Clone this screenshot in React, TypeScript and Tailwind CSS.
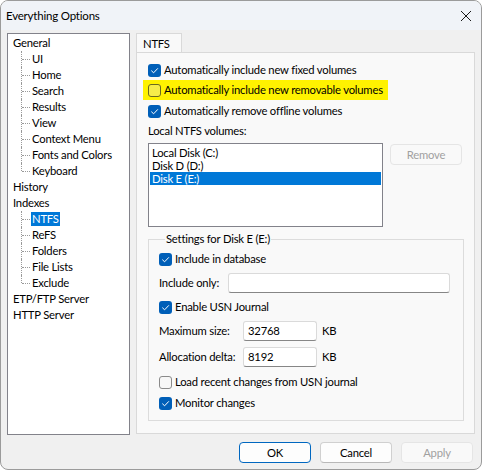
import type { ReactNode } from "react";

type Node = { label: string; children?: string[] };

const tree: Node[] = [
  { label: "General", children: ["UI", "Home", "Search", "Results", "View", "Context Menu", "Fonts and Colors", "Keyboard"] },
  { label: "History" },
  { label: "Indexes", children: ["NTFS", "ReFS", "Folders", "File Lists", "Exclude"] },
  { label: "ETP/FTP Server" },
  { label: "HTTP Server" },
];

function Check({ on, dark }: { on: boolean; dark?: boolean }) {
  if (on) {
    return (
      <span className="flex h-[13px] w-[13px] shrink-0 items-center justify-center rounded-[3px] bg-[#005fb8]">
        <svg width="13" height="13" viewBox="0 0 13 13" fill="none">
          <path d="M3.6 6.9 L5.6 8.8 L9.6 4.6" stroke="#fff" strokeWidth="1" strokeLinecap="round" strokeLinejoin="round" />
        </svg>
      </span>
    );
  }
  return (
    <span
      className={`h-[13px] w-[13px] shrink-0 rounded-[3px] border ${dark ? "border-[#6a6a20] bg-[#f6ec4a]" : "border-[#8a8a8a] bg-[#f7f7f7]"}`}
    />
  );
}

function CheckRow({ on, children, className = "" }: { on: boolean; children: ReactNode; className?: string }) {
  return (
    <div className={`flex h-[20px] items-center gap-[3px] whitespace-nowrap ${className}`}>
      <Check on={on} />
      <span>{children}</span>
    </div>
  );
}

function Field({ value, className = "" }: { value?: string; className?: string }) {
  return (
    <div className={`flex h-[20px] items-center rounded-[3px] border border-[#dadada] border-b-[#868686] bg-white px-[4px] ${className}`}>
      {value}
    </div>
  );
}

function Button({ label, primary, disabled }: { label: string; primary?: boolean; disabled?: boolean }) {
  return (
    <div
      className={`flex h-[21px] w-[72px] items-center justify-center rounded-[4px] border ${
        primary
          ? "border-[#0067c0] bg-[#fdfdfd] text-black"
          : disabled
            ? "border-[#e5e5e5] bg-[#f9f9f9] text-[#a0a0a0]"
            : "border-[#d0d0d0] border-b-[#b8b8b8] bg-[#fdfdfd] text-black"
      }`}
    >
      {label}
    </div>
  );
}

function Tree() {
  return (
    <div className="h-[402px] w-[123px] whitespace-nowrap border border-[#82828a] bg-white pl-[5px] pt-[1px]">
      {tree.map((n) => (
        <div key={n.label}>
          <div className="flex h-[16px] items-center">{n.label}</div>
          {n.children?.map((c, i) => {
            const last = i === n.children!.length - 1;
            return (
              <div key={c} className="relative flex h-[16px] items-center pl-[18px]">
                <span className={`absolute left-[8px] top-0 w-0 border-l border-dotted border-[#9a9a9a] ${last ? "h-[8px]" : "h-[16px]"}`} />
                <span className="absolute left-[9px] top-[8px] h-0 w-[8px] border-t border-dotted border-[#9a9a9a]" />
                <span className={`px-[1px] leading-[14px] ${c === "NTFS" ? "bg-[#0078d7] text-white" : ""}`}>{c}</span>
              </div>
            );
          })}
        </div>
      ))}
    </div>
  );
}

export default function App() {
  return (
    <div className="h-[470px] w-[482px] bg-white font-[family-name:Lato,sans-serif] text-[11.25px] leading-[16px] tracking-[-0.2px] text-black">
      <div className="flex h-full flex-col overflow-hidden rounded-[8px] border border-[#9b9b9b] bg-[#f0f0f0]">
        {/* title bar */}
        <div className="flex h-[29px] shrink-0 items-center justify-between bg-[#f0f3f8] pl-[5px] pr-[9px]">
          <span className="text-[11.5px]">Everything Options</span>
          <svg width="12" height="12" viewBox="0 0 12 12" fill="none">
            <path d="M1 1 L11 11 M11 1 L1 11" stroke="#1a1a1a" strokeWidth="1" />
          </svg>
        </div>

        <div className="mt-[3px] flex gap-[6px] pl-[6px]">
          <Tree />

          <div className="flex w-[339px] flex-col">
            <div className="flex h-[20px] w-[46px] items-center border border-b-0 border-[#d9d9d9] bg-[#f9f9f9] pl-[6px]">NTFS</div>
            <div className="-mt-px h-[382px] border border-[#d9d9d9] bg-[#f9f9f9] pl-[11px] pt-[7px]">
              <CheckRow on>Automatically include new fixed volumes</CheckRow>
              <div className="-ml-[5px] flex h-[20px] w-[245px] items-center gap-[3px] whitespace-nowrap bg-[#fff200] pl-[5px]">
                <Check on={false} dark />
                <span>Automatically include new removable volumes</span>
              </div>
              <CheckRow on className="mt-px">Automatically remove offline volumes</CheckRow>
              <div className="flex h-[20px] items-center">Local NTFS volumes:</div>

              <div className="mt-[2px] flex gap-[7px]">
                <div className="h-[84px] w-[235px] border border-[#82828a] bg-white p-[1px] pt-[2px] leading-[13px]">
                  {["Local Disk (C:)", "Disk D (D:)", "Disk E (E:)"].map((d) => (
                    <div key={d} className={`h-[13px] px-[2px] ${d === "Disk E (E:)" ? "bg-[#0078d7] text-white" : ""}`}>
                      {d}
                    </div>
                  ))}
                </div>
                <div className="mt-px flex h-[21px] w-[72px] items-center justify-center rounded-[4px] border border-[#e5e5e5] bg-[#f9f9f9] text-[#a0a0a0]">
                  Remove
                </div>
              </div>

              <fieldset className="mt-[5px] h-[189px] w-[316px] whitespace-nowrap border border-[#dcdcdc] pl-[10px]">
                <legend className="ml-[6px] px-[1px] leading-[14px]">Settings for Disk E (E:)</legend>
                <CheckRow on className="mt-[3px]">Include in database</CheckRow>
                <div className="mt-[3px] flex h-[21px] items-center">
                  <span className="w-[69px]">Include only:</span>
                  <Field className="w-[222px]" />
                </div>
                <CheckRow on className="mt-[4px]">Enable USN Journal</CheckRow>
                <div className="mt-[3px] flex h-[21px] items-center">
                  <span className="w-[84px]">Maximum size:</span>
                  <Field value="32768" className="w-[74px]" />
                  <span className="ml-[5px]">KB</span>
                </div>
                <div className="mt-[5px] flex h-[21px] items-center">
                  <span className="w-[84px]">Allocation delta:</span>
                  <Field value="8192" className="w-[74px]" />
                  <span className="ml-[5px]">KB</span>
                </div>
                <CheckRow on={false} className="mt-[5px]">Load recent changes from USN journal</CheckRow>
                <CheckRow on className="mt-px">Monitor changes</CheckRow>
              </fieldset>
            </div>
          </div>
        </div>

        <div className="mt-[7px] flex justify-end gap-[9px] pr-[8px]">
          <Button label="OK" primary />
          <Button label="Cancel" />
          <Button label="Apply" disabled />
        </div>
      </div>
    </div>
  );
}
